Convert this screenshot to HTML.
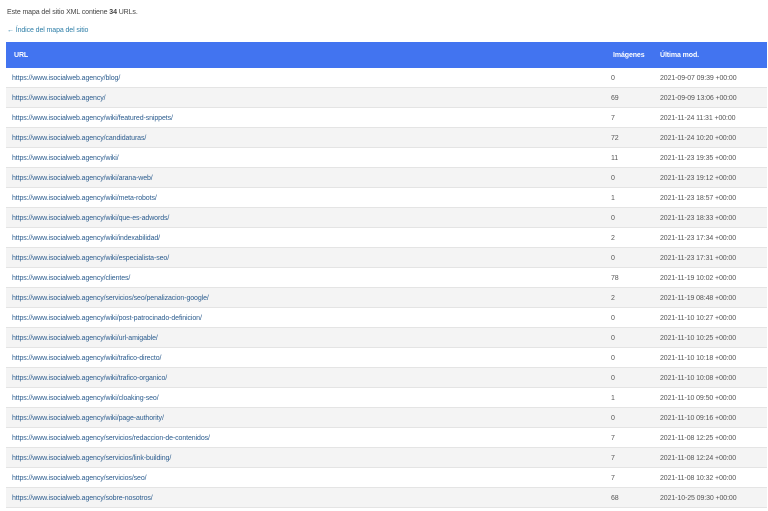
<!DOCTYPE html>
<html><head><meta charset="utf-8"><style>
body{margin:0;background:#fff;font-family:"Liberation Sans",sans-serif;font-size:7px;letter-spacing:-0.1px;color:#444;}
.top{position:absolute;left:7px;top:9px;}
.idx{position:absolute;left:7px;top:27px;color:#2f7fa8;}
table{position:absolute;left:6px;top:42px;width:761px;border-collapse:collapse;}
th{background:#4274f0;color:#fff;text-align:left;font-weight:bold;height:25px;padding:0;padding-top:1px;box-sizing:content-box;}
td{height:18px;padding:0;padding-top:1px;border-bottom:1px solid #e4e4e4;color:#555;box-sizing:content-box;}
tr:nth-child(even) td{background:#f4f4f4;}
td a{color:#2c5d8f;text-decoration:none;}
.c1{padding-left:6px;}
.c2{width:49px;}
.c3{width:107px;}
th.c2{padding-left:2px;width:47px;}
</style></head><body>
<div class="top">Este mapa del sitio XML contiene <b>34</b> URLs.</div>
<div class="idx">← Índice del mapa del sitio</div>
<table>
<thead><tr><th class="c1" style="padding-left:8px">URL</th><th class="c2">Imágenes</th><th class="c3">Última mod.</th></tr></thead>
<tbody>
<tr><td class="c1"><a>https://www.isocialweb.agency/blog/</a></td><td>0</td><td>2021-09-07 09:39 +00:00</td></tr>
<tr><td class="c1"><a>https://www.isocialweb.agency/</a></td><td>69</td><td>2021-09-09 13:06 +00:00</td></tr>
<tr><td class="c1"><a>https://www.isocialweb.agency/wiki/featured-snippets/</a></td><td>7</td><td>2021-11-24 11:31 +00:00</td></tr>
<tr><td class="c1"><a>https://www.isocialweb.agency/candidaturas/</a></td><td>72</td><td>2021-11-24 10:20 +00:00</td></tr>
<tr><td class="c1"><a>https://www.isocialweb.agency/wiki/</a></td><td>11</td><td>2021-11-23 19:35 +00:00</td></tr>
<tr><td class="c1"><a>https://www.isocialweb.agency/wiki/arana-web/</a></td><td>0</td><td>2021-11-23 19:12 +00:00</td></tr>
<tr><td class="c1"><a>https://www.isocialweb.agency/wiki/meta-robots/</a></td><td>1</td><td>2021-11-23 18:57 +00:00</td></tr>
<tr><td class="c1"><a>https://www.isocialweb.agency/wiki/que-es-adwords/</a></td><td>0</td><td>2021-11-23 18:33 +00:00</td></tr>
<tr><td class="c1"><a>https://www.isocialweb.agency/wiki/indexabilidad/</a></td><td>2</td><td>2021-11-23 17:34 +00:00</td></tr>
<tr><td class="c1"><a>https://www.isocialweb.agency/wiki/especialista-seo/</a></td><td>0</td><td>2021-11-23 17:31 +00:00</td></tr>
<tr><td class="c1"><a>https://www.isocialweb.agency/clientes/</a></td><td>78</td><td>2021-11-19 10:02 +00:00</td></tr>
<tr><td class="c1"><a>https://www.isocialweb.agency/servicios/seo/penalizacion-google/</a></td><td>2</td><td>2021-11-19 08:48 +00:00</td></tr>
<tr><td class="c1"><a>https://www.isocialweb.agency/wiki/post-patrocinado-definicion/</a></td><td>0</td><td>2021-11-10 10:27 +00:00</td></tr>
<tr><td class="c1"><a>https://www.isocialweb.agency/wiki/url-amigable/</a></td><td>0</td><td>2021-11-10 10:25 +00:00</td></tr>
<tr><td class="c1"><a>https://www.isocialweb.agency/wiki/trafico-directo/</a></td><td>0</td><td>2021-11-10 10:18 +00:00</td></tr>
<tr><td class="c1"><a>https://www.isocialweb.agency/wiki/trafico-organico/</a></td><td>0</td><td>2021-11-10 10:08 +00:00</td></tr>
<tr><td class="c1"><a>https://www.isocialweb.agency/wiki/cloaking-seo/</a></td><td>1</td><td>2021-11-10 09:50 +00:00</td></tr>
<tr><td class="c1"><a>https://www.isocialweb.agency/wiki/page-authority/</a></td><td>0</td><td>2021-11-10 09:16 +00:00</td></tr>
<tr><td class="c1"><a>https://www.isocialweb.agency/servicios/redaccion-de-contenidos/</a></td><td>7</td><td>2021-11-08 12:25 +00:00</td></tr>
<tr><td class="c1"><a>https://www.isocialweb.agency/servicios/link-building/</a></td><td>7</td><td>2021-11-08 12:24 +00:00</td></tr>
<tr><td class="c1"><a>https://www.isocialweb.agency/servicios/seo/</a></td><td>7</td><td>2021-11-08 10:32 +00:00</td></tr>
<tr><td class="c1"><a>https://www.isocialweb.agency/sobre-nosotros/</a></td><td>68</td><td>2021-10-25 09:30 +00:00</td></tr>
</tbody></table>
</body></html>
